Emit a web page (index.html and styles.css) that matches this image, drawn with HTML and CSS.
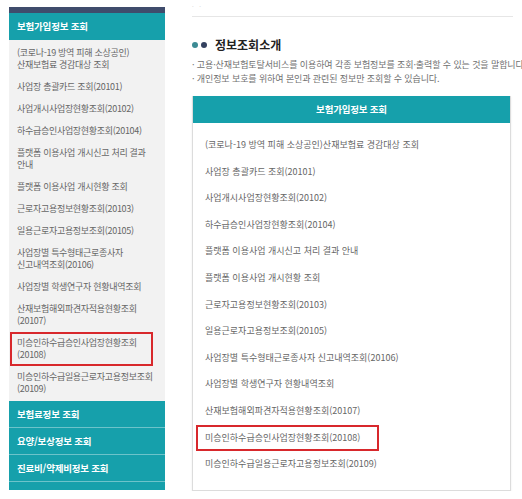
FILE: index.html
```html
<!DOCTYPE html>
<html lang="ko">
<head>
<meta charset="utf-8">
<title>보험가입정보 조회</title>
<link rel="stylesheet" href="styles.css">
</head>
<body>
<div class="page">
  <aside class="side">
    <div class="side-top"></div>
    <div class="side-head">보험가입정보 조회</div>
    <ul class="side-list">
      <li>(코로나-19 방역 피해 소상공인)<br>산재보험료 경감대상 조회</li>
      <li>사업장 총괄카드 조회(20101)</li>
      <li>사업개시사업장현황조회(20102)</li>
      <li>하수급승인사업장현황조회(20104)</li>
      <li>플랫폼 이용사업 개시신고 처리 결과<br>안내</li>
      <li>플랫폼 이용사업 개시현황 조회</li>
      <li>근로자고용정보현황조회(20103)</li>
      <li>일용근로자고용정보조회(20105)</li>
      <li>사업장별 특수형태근로종사자<br>신고내역조회(20106)</li>
      <li>사업장별 학생연구자 현황내역조회</li>
      <li>산재보험해외파견자적용현황조회<br>(20107)</li>
      <li class="hl">미승인하수급승인사업장현황조회<br>(20108)</li>
      <li>미승인하수급일용근로자고용정보조회<br>(20109)</li>
    </ul>
    <div class="side-menu">보험료정보 조회</div>
    <div class="side-menu">요양/보상정보 조회</div>
    <div class="side-menu">진료비/약제비정보 조회</div>
    <div class="side-menu side-menu-cut"></div>
  </aside>
  <main class="content">
    <div class="crumb">· ·</div>
    <h2 class="intro-title"><span class="dot dot-a"></span><span class="dot dot-b"></span>정보조회소개</h2>
    <p class="intro-line">· 고용·산재보험토탈서비스를 이용하여 각종 보험정보를 조회·출력할 수 있는 것을 말합니다.</p>
    <p class="intro-line">· 개인정보 보호를 위하여 본인과 관련된 정보만 조회할 수 있습니다.</p>
    <section class="box">
      <div class="box-head">보험가입정보 조회</div>
      <ul class="box-list">
        <li>(코로나-19 방역 피해 소상공인)산재보험료 경감대상 조회</li>
        <li>사업장 총괄카드 조회(20101)</li>
        <li>사업개시사업장현황조회(20102)</li>
        <li>하수급승인사업장현황조회(20104)</li>
        <li>플랫폼 이용사업 개시신고 처리 결과 안내</li>
        <li>플랫폼 이용사업 개시현황 조회</li>
        <li>근로자고용정보현황조회(20103)</li>
        <li>일용근로자고용정보조회(20105)</li>
        <li>사업장별 특수형태근로종사자 신고내역조회(20106)</li>
        <li>사업장별 학생연구자 현황내역조회</li>
        <li>산재보험해외파견자적용현황조회(20107)</li>
        <li class="hl">미승인하수급승인사업장현황조회(20108)</li>
        <li>미승인하수급일용근로자고용정보조회(20109)</li>
      </ul>
    </section>
  </main>
</div>
</body>
</html>
```
FILE: styles.css
```css
html, body {
  margin: 0;
  padding: 0;
  overflow: hidden;
  background: #fff;
}
body {
  font-family: "Noto Sans CJK KR", "Noto Sans", sans-serif;
  color: #666;
}
ul {
  list-style: none;
  margin: 0;
  padding: 0;
}
.page {
  display: flex;
  align-items: flex-start;
  gap: 27px;
  padding-left: 9px;
}

/* sidebar */
.side {
  width: 156px;
  flex: none;
  margin-top: 7px;
}
.side-top {
  height: 6px;
  background: #3f4c6c;
}
.side-head,
.side-menu {
  height: 27px;
  line-height: 27px;
  background: #16a0ab;
  color: #fff;
  font-weight: bold;
  font-size: 9.5px;
  padding-left: 8px;
  letter-spacing: -0.2px;
}
.side-menu {
  border-bottom: 1px solid #6cc3ca;
  height: 26px;
  line-height: 26px;
}
.side-menu-cut {
  height: 8px;
  border-bottom: 0;
}
.side-list {
  background: #f2f2f2;
  padding: 2px 0 1px;
}
.side-list li {
  padding: 5px 8px;
  font-size: 9px;
  line-height: 12px;
  letter-spacing: -0.3px;
  white-space: nowrap;
  color: #666;
}
.side-list li.hl {
  margin: 0 12px 0 1px;
  padding: 3px 5px;
  border: 2px solid #d8282c;
}

/* content */
.content {
  width: 321px;
  flex: none;
}
.crumb {
  height: 16px;
  border-bottom: 1px solid #e6e6e6;
  font-size: 6px;
  line-height: 14px;
  color: #c9c9c9;
  letter-spacing: 2px;
}
.intro-title {
  margin: 20px 0 5px;
  font-size: 12px;
  line-height: 16px;
  font-weight: bold;
  color: #222;
  display: flex;
  align-items: center;
}
.dot {
  width: 6px;
  height: 6px;
  border-radius: 50%;
  margin-right: 3px;
}
.dot-a {
  background: #3c8b94;
}
.dot-b {
  background: #34415f;
  margin-right: 8px;
}
.intro-line {
  margin: 0;
  font-size: 9px;
  line-height: 14px;
  color: #707070;
  white-space: nowrap;
  letter-spacing: -0.1px;
}
.box {
  margin-top: 10px;
  width: 317px;
  border: 1px solid #dcdcdc;
  border-top: 0;
  box-shadow: 0 1px 2px rgba(0, 0, 0, 0.08);
  background: #fff;
}
.box-head {
  height: 27px;
  line-height: 27px;
  background: #16a0ab;
  color: #fff;
  font-weight: bold;
  font-size: 9.5px;
  text-align: center;
  letter-spacing: -0.2px;
}
.box-list {
  padding: 9px 0 12px;
}
.box-list li {
  padding-left: 12px;
  font-size: 9px;
  line-height: 26.6px;
  letter-spacing: 0;
  color: #666;
  white-space: nowrap;
}
.box-list li.hl {
  width: 183px;
  box-sizing: border-box;
  margin-left: 3px;
  padding-left: 7px;
  line-height: 22.6px;
  border: 2px solid #d8282c;
}
```
